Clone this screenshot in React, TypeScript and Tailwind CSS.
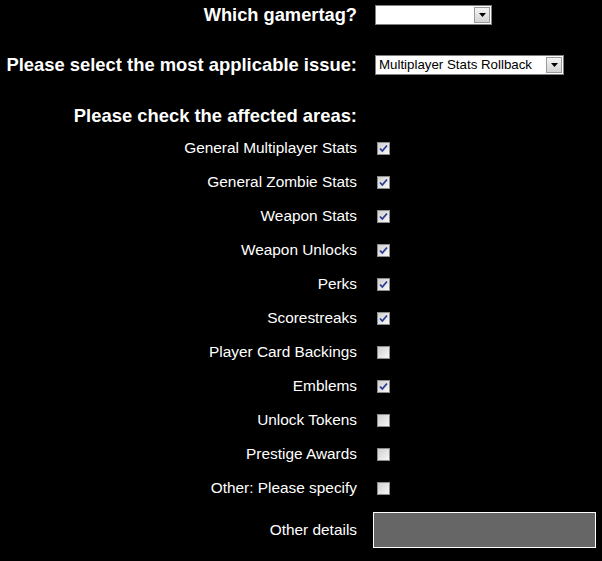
const areas: { label: string; checked: boolean }[] = [
  { label: 'General Multiplayer Stats', checked: true },
  { label: 'General Zombie Stats', checked: true },
  { label: 'Weapon Stats', checked: true },
  { label: 'Weapon Unlocks', checked: true },
  { label: 'Perks', checked: true },
  { label: 'Scorestreaks', checked: true },
  { label: 'Player Card Backings', checked: false },
  { label: 'Emblems', checked: true },
  { label: 'Unlock Tokens', checked: false },
  { label: 'Prestige Awards', checked: false },
  { label: 'Other: Please specify', checked: false },
];

function FakeSelect({ width, value }: { width: string; value?: string }) {
  return (
    <div className={`flex h-[20px] ${width} items-stretch border border-[#7f7f7f] bg-white p-[1px]`}>
      <span className="flex-1 truncate pl-[2px] text-[13.3px] leading-[16px] text-black">{value}</span>
      <span className="flex w-[16px] items-center justify-center border border-[#9a9a9a] bg-gradient-to-b from-[#f4f4f4] to-[#d4d4d4]">
        <svg width="7" height="4" viewBox="0 0 7 4">
          <path d="M0 0h7L3.5 4z" fill="#000" />
        </svg>
      </span>
    </div>
  );
}

function Check({ checked }: { checked: boolean }) {
  return (
    <span className="flex h-[13px] w-[13px] items-center justify-center border border-[#8c8c8c] bg-gradient-to-br from-[#cfcfcf] to-[#f8f8f8]">
      {checked && (
        <svg width="9" height="9" viewBox="0 0 9 9">
          <path d="M1 4.5 3.3 7 8 1.5" fill="none" stroke="#2b3a8f" strokeWidth="1.8" />
        </svg>
      )}
    </span>
  );
}

export default function App() {
  return (
    <div className="h-[561px] w-[602px] overflow-hidden bg-black font-['Liberation_Sans',Arial,sans-serif] text-white">
      <div className="grid grid-cols-[357px_1fr] gap-x-[18px]">
        <div className="flex h-[30px] items-center justify-end text-[18.3px] font-bold">Which gamertag?</div>
        <div className="flex h-[30px] items-center">
          <FakeSelect width="w-[117px]" />
        </div>

        <div className="flex h-[70px] items-center justify-end text-[18.4px] font-bold whitespace-nowrap">
          Please select the most applicable issue:
        </div>
        <div className="flex h-[70px] items-center">
          <FakeSelect width="w-[189px]" value="Multiplayer Stats Rollback" />
        </div>

        <div className="flex h-[31px] items-center justify-end text-[18.4px] font-bold">Please check the affected areas:</div>
        <div className="h-[31px]" />

        {areas.map((a) => (
          <div key={a.label} className="contents">
            <div className="flex h-[34px] items-center justify-end text-[15.4px]">{a.label}</div>
            <div className="flex h-[34px] items-center pl-[2px]">
              <Check checked={a.checked} />
            </div>
          </div>
        ))}

        <div className="flex h-[50px] items-center justify-end text-[15.4px]">Other details</div>
        <div className="flex h-[50px] items-center -ml-[2px]">
          <div className="h-[36px] w-[223px] border border-white bg-[#666666]" />
        </div>
      </div>
    </div>
  );
}
